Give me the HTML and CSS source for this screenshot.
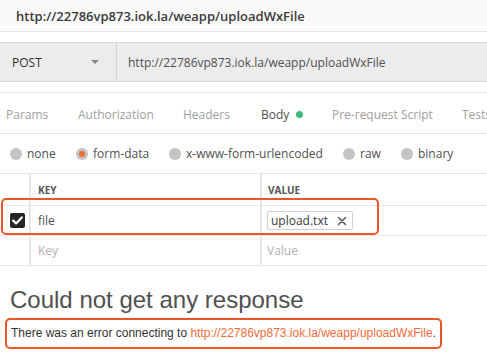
FILE: index.html
```html
<!DOCTYPE html>
<html>
<head>
<meta charset="utf-8">
<link rel="stylesheet" href="styles.css">
</head>
<body>
<div class="page">
  <div class="title">http://22786vp873.iok.la/weapp/uploadWxFile</div>
  <div class="urlbar">
    <div class="method"><span>POST</span><span class="caret"></span></div>
    <div class="url">http://22786vp873.iok.la/weapp/uploadWxFile</div>
  </div>
  <div class="tabs">
    <span class="tab t-params">Params</span>
    <span class="tab t-auth">Authorization</span>
    <span class="tab t-headers">Headers</span>
    <span class="tab t-body active">Body <i class="dot"></i></span>
    <span class="tab t-pre">Pre-request Script</span>
    <span class="tab t-tests">Tests</span>
  </div>
  <div class="radios">
    <span class="radio r-none"><i class="rb"></i>none</span>
    <span class="radio r-form"><i class="rb on"></i>form-data</span>
    <span class="radio r-x"><i class="rb"></i>x-www-form-urlencoded</span>
    <span class="radio r-raw"><i class="rb"></i>raw</span>
    <span class="radio r-bin"><i class="rb"></i>binary</span>
  </div>
  <div class="table">
    <div class="row head">
      <div class="c0"></div>
      <div class="c1">KEY</div>
      <div class="c2">VALUE</div>
    </div>
    <div class="row">
      <div class="c0"><span class="check"><svg width="11" height="9" viewBox="0 0 11 9"><path d="M1.2 4.6 L4.1 7.4 L9.8 1.4" fill="none" stroke="#fff" stroke-width="2.2" stroke-linecap="round" stroke-linejoin="round"/></svg></span></div>
      <div class="c1 val">file</div>
      <div class="c2"><span class="chip">upload.txt<svg class="x" width="10" height="10" viewBox="0 0 10 10"><path d="M1.5 1.5 L8.5 8.5 M8.5 1.5 L1.5 8.5" stroke="#555" stroke-width="1.5" stroke-linecap="round"/></svg></span></div>
    </div>
    <div class="row">
      <div class="c0"></div>
      <div class="c1 ph">Key</div>
      <div class="c2 ph">Value</div>
    </div>
    <div class="hl hl-row"></div>
  </div>
  <div class="response">
    <h1 class="heading">Could not get any response</h1>
    <p class="err">There was an error connecting to <span class="link">http://22786vp873.iok.la/weapp/uploadWxFile</span>.</p>
    <div class="hl hl-err"></div>
  </div>
</div>
</body>
</html>
```
FILE: styles.css
```css
* { box-sizing: border-box; }
html, body { margin: 0; padding: 0; }
body { width: 487px; height: 355px; overflow: hidden; background: #fff; font-family: "Open Sans", sans-serif; color: #505050; }
.page { position: relative; }
.title { height: 32px; padding: 7px 0 0 16px; font-size: 13px; font-weight: 600; color: #3a3a3a; border-bottom: 1px solid #e6e6e6; background: #fafafa; }
.urlbar { margin-top: 10px; height: 40px; display: flex; background: #ececec; border-top: 1px solid #dcdcdc; border-bottom: 1px solid #dcdcdc; }
.method { width: 117px; display: flex; align-items: center; padding-left: 12px; font-size: 12px; color: #333; border-right: 1px solid #d4d4d4; position: relative; }
.caret { margin-left: 49px; width: 0; height: 0; border-left: 4px solid transparent; border-right: 4px solid transparent; border-top: 4px solid #888; }
.url { display: flex; align-items: center; padding-left: 11px; font-size: 12px; color: #505050; }
.tabs { margin-top: 10px; height: 42px; border-top: 1px solid #e6e6e6; border-bottom: 1px solid #e6e6e6; display: flex; align-items: center; font-size: 12px; color: #a0a0a0; position: relative; overflow: hidden; }
.tab { position: absolute; top: 13px; white-space: nowrap; }
.t-params { left: 6px; }
.t-auth { left: 78px; }
.t-headers { left: 183px; }
.t-body { left: 261px; color: #505050; }
.t-body::after { content: ""; position: absolute; left: -16px; right: -18px; top: 27px; height: 3px; background: #f26b3a; }
.t-pre { left: 332px; }
.t-tests { left: 462px; }
.dot { display: inline-block; width: 7px; height: 7px; border-radius: 50%; background: #3bb87a; margin-left: 4px; vertical-align: 1px; }
.radios { height: 39px; position: relative; font-size: 12px; color: #505050; }
.radio { position: absolute; top: 11px; display: flex; align-items: center; }
.rb { display: inline-block; width: 12px; height: 12px; border-radius: 50%; background: #c4c4c4; margin-right: 5px; position: relative; }
.rb.on::after { content: ""; position: absolute; left: 3px; top: 3px; width: 6px; height: 6px; border-radius: 50%; background: #f26b3a; }
.r-none { left: 10px; }
.r-form { left: 76px; }
.r-x { left: 169px; }
.r-raw { left: 343px; }
.r-bin { left: 401px; }
.table { position: relative; border-top: 1px solid #e6e6e6; border-bottom: 1px solid #e6e6e6; }
.row { display: flex; height: 30px; border-top: 1px solid #e6e6e6; }
.row.head { height: 31px; border-top: none; }
.c0 { width: 31px; border-right: 2px solid #e6e6e6; display: flex; align-items: center; justify-content: center; }
.c1 { width: 231px; border-right: 2px solid #e6e6e6; display: flex; align-items: center; padding-left: 7px; font-size: 12px; color: #505050; }
.c2 { flex: 1; display: flex; align-items: center; padding-left: 5px; font-size: 12px; color: #505050; }
.head .c1, .head .c2 { font-size: 10px; font-weight: 700; color: #555; padding-top: 0; }
.head .c2 { padding-left: 6px; }
.ph { color: #b3b3b3; }
.check { width: 15px; height: 15px; border-radius: 2px; background: #262626; display: flex; align-items: center; justify-content: center; margin-left: 6px; }
.chip { height: 19px; display: inline-flex; align-items: center; padding: 0 5px 0 3px; border: 1px solid #cfcfcf; border-radius: 2px; background: #fff; color: #3a3a3a; font-size: 12px; }
.chip .x { margin-left: 9px; }
.hl { position: absolute; border: 2px solid #ec5528; border-radius: 5px; }
.hl-row { left: 1px; top: 24px; width: 378px; height: 37px; }
.response { position: relative; padding: 20px 0 0 10px; }
.heading { margin: 0; font-family: "Liberation Sans", Arial, sans-serif; font-weight: 400; font-size: 24px; line-height: 28px; color: #505050; }
.err { margin: 12px 0 0 1px; font-family: "Liberation Sans", Arial, sans-serif; font-size: 12px; color: #333; }
.link { color: #f26b3a; }
.hl-err { left: 5px; top: 52px; width: 437px; height: 31px; }
```
